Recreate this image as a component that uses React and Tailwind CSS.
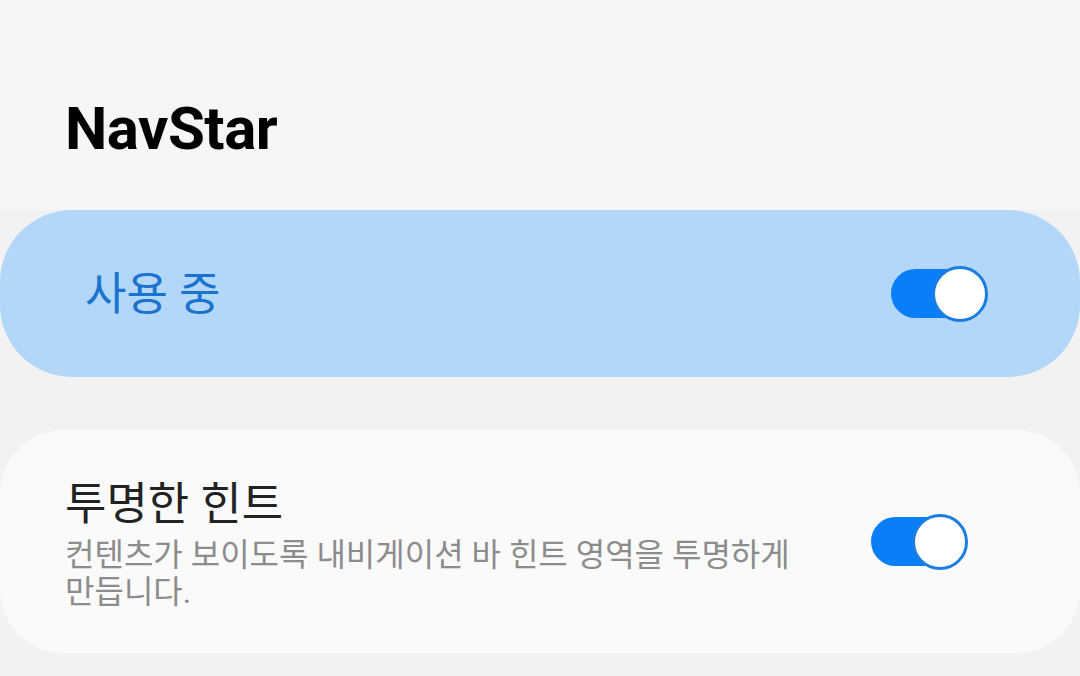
import { useState } from 'react';

const Toggle = ({ checked, onChange }) => (
  <button
    type="button"
    onClick={onChange}
    className="relative h-[56px] w-[97px] shrink-0"
    aria-pressed={checked}
  >
    <span
      className={`absolute left-0 top-[3.5px] h-[49px] w-[90px] rounded-full ${
        checked ? 'bg-[#0a7ef6]' : 'bg-[#c8c8c8]'
      }`}
    />
    <span
      className={`absolute top-0 h-[56px] w-[56px] rounded-full border-[3px] bg-white ${
        checked ? 'right-0 border-[#1a7de2]' : 'left-0 border-[#c8c8c8]'
      }`}
    />
  </button>
);

const App = () => {
  const [enabled, setEnabled] = useState(true);
  const [transparentHint, setTransparentHint] = useState(true);

  return (
    <div
      className="min-h-[676px] bg-[#f2f2f2]"
      style={{ fontFamily: 'Roboto, "Noto Sans CJK KR", sans-serif' }}
    >
      <div className="flex h-[210px] items-center bg-[#f6f6f6] px-[65px] pt-[48px]">
        <h1 className="text-[60px] font-bold leading-none tracking-[-0.5px] text-black">NavStar</h1>
      </div>

      <div className="flex h-[167px] items-center justify-between rounded-[72px] bg-[#b3d7f8] pl-[85px] pr-[92px]">
        <span className="pt-[2px] text-[45px] leading-none text-[#1a74cf]">사용 중</span>
        <Toggle checked={enabled} onChange={() => setEnabled((v) => !v)} />
      </div>

      <div className="mt-[53px] flex h-[223px] items-center justify-between rounded-[64px] bg-[#fafafa] pl-[65px] pr-[112px]">
        <div className="w-[750px] pt-[6px]">
          <p className="text-[45px] leading-[52px] text-[#222222]">투명한 힌트</p>
          <p className="mt-[6px] text-[32px] leading-[37px] text-[#8c8c8c]">
            컨텐츠가 보이도록 내비게이션 바 힌트 영역을 투명하게 만듭니다.
          </p>
        </div>
        <Toggle checked={transparentHint} onChange={() => setTransparentHint((v) => !v)} />
      </div>
    </div>
  );
};

export default App;
